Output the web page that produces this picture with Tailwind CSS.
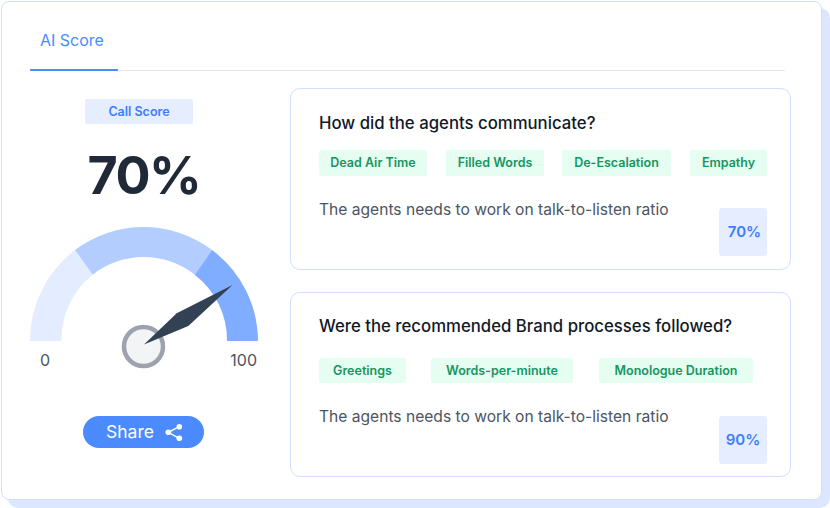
<!DOCTYPE html>
<html lang="en">
  <head>
    <meta charset="UTF-8" />
    <title>AI Score</title>
    <script src="https://cdn.jsdelivr.net/npm/@tailwindcss/browser@4"></script>
  </head>
  <body class="bg-white font-['Inter',sans-serif] overflow-hidden">
    <div class="relative w-[830px] h-[508px] overflow-hidden">
      <!-- offset panel behind the card -->
      <div class="absolute left-[8px] top-[8px] w-[822px] h-[500px] rounded-[10px] bg-[#dce7ff]"></div>

      <div class="absolute left-0 top-0 ml-px mt-px w-[821px] h-[499px] bg-white border border-[#d0e0ff] rounded-[8px] pl-[28px] pr-[36px]">
        <!-- tabs -->
        <div class="h-[69px] border-b border-[#e5e7eb] flex">
          <div class="w-[88px] h-[69px] border-b-[2px] border-[#4b8bff] rounded-[1px] pl-[10px] pt-[28px] text-[16px] leading-[20px] text-[#4b8bff]">AI Score</div>
        </div>

        <div class="flex">
          <!-- gauge column -->
          <div class="w-[228px] shrink-0 mr-[32px] flex flex-col items-center">
            <div class="self-start ml-[55px] mt-[28px] w-[108px] h-[25px] rounded-[2px] bg-[#e6edff] text-[#3b7fff] text-[12.5px] leading-[25px] font-semibold text-center">Call Score</div>
            <div class="mt-[21px] h-[62px] text-[52px] leading-[62px] tracking-[-1.5px] font-bold text-[#1f2937]">70%</div>
            <svg class="block mt-[19px]" width="228" height="144" viewBox="30 226 228 144">
              <path d="M30 341A114 114 0 0 1 75 250L92.700 274.700A82.500 82.500 0 0 0 61.500 341Z" fill="#e4ecff" />
              <path d="M75 250A114 114 0 0 1 212 250L194.700 274.700A82.500 82.500 0 0 0 92.700 274.700Z" fill="#b3cdff" />
              <path d="M212 250A114 114 0 0 1 258 341L227 341A82.500 82.500 0 0 0 194.700 274.700Z" fill="#80adff" />
              <circle cx="143.500" cy="346.500" r="19.500" fill="#f3f4f6" stroke="#9ca3af" stroke-width="4.500" />
              <path d="M144 344.500L176.700 313.300L232.500 285L188.300 326Z" fill="#334155" />
            </svg>
            <div class="w-full -mt-[20px] flex justify-between pl-[10px] pr-px text-[16px] leading-[20px] text-[#4b5563]">
              <span>0</span><span>100</span>
            </div>
            <button class="-ml-px mt-[46px] w-[121px] h-[32px] rounded-full bg-[#4b8bff] text-white text-[17.5px] flex items-center pl-[23px] gap-[9px]">
              <span>Share</span>
              <svg width="20" height="20" viewBox="0 0 20 20" fill="none" stroke="white" stroke-width="1.500">
                <path d="M16.300 4.700L5.300 10.300L16.300 16.300" />
                <circle cx="16.300" cy="4.700" r="2.800" fill="white" stroke="none" />
                <circle cx="5.300" cy="10.300" r="2.800" fill="white" stroke="none" />
                <circle cx="16.300" cy="16.300" r="2.800" fill="white" stroke="none" />
              </svg>
            </button>
          </div>

          <!-- question cards -->
          <div class="w-[501px] shrink-0 flex flex-col gap-[22px] mt-[17px]">
            <div class="h-[182px] border border-[#d0e0ff] rounded-[10px] pl-[28px] pr-[23px] pt-[23px]">
              <h2 class="text-[16.75px] leading-[22px] font-medium text-[#111827]">How did the agents communicate?</h2>
              <div class="flex gap-[18px] mt-[16px]">
                <span class="w-[108px] h-[26px] rounded-[2px] bg-[#e6fdf2] text-[#16965f] text-[12.5px] leading-[26px] font-semibold text-center">Dead Air Time</span>
                <span class="ml-px w-[98px] h-[26px] rounded-[2px] bg-[#e6fdf2] text-[#16965f] text-[12.5px] leading-[26px] font-semibold text-center">Filled Words</span>
                <span class="w-[109px] h-[26px] rounded-[2px] bg-[#e6fdf2] text-[#16965f] text-[12.5px] leading-[26px] font-semibold text-center">De-Escalation</span>
                <span class="ml-px w-[77px] h-[26px] rounded-[2px] bg-[#e6fdf2] text-[#16965f] text-[12.5px] leading-[26px] font-semibold text-center">Empathy</span>
              </div>
              <div class="flex justify-between mt-[32px]">
                <p class="-mt-[8px] text-[15.6px] leading-[20px] text-[#4b5563]">The agents needs to work on talk-to-listen ratio</p>
                <div class="w-[48px] pl-[3px] h-[48px] rounded-[3px] bg-[#e6edff] text-[#3b7fff] text-[15px] leading-[48px] font-semibold text-center">70%</div>
              </div>
            </div>

            <div class="h-[185px] border border-[#d0e0ff] rounded-[10px] pl-[28px] pr-[23px] pt-[22px]">
              <h2 class="text-[16.75px] leading-[22px] font-medium text-[#111827]">Were the recommended Brand processes followed?</h2>
              <div class="flex gap-[25px] mt-[21px]">
                <span class="w-[87px] h-[25px] rounded-[2px] bg-[#e6fdf2] text-[#16965f] text-[12.5px] leading-[25px] font-semibold text-center">Greetings</span>
                <span class="w-[142px] h-[25px] rounded-[2px] bg-[#e6fdf2] text-[#16965f] text-[12.5px] leading-[25px] font-semibold text-center">Words-per-minute</span>
                <span class="ml-px w-[154px] h-[25px] rounded-[2px] bg-[#e6fdf2] text-[#16965f] text-[12.5px] leading-[25px] font-semibold text-center">Monologue Duration</span>
              </div>
              <div class="flex justify-between mt-[33px]">
                <p class="-mt-[9px] text-[15.6px] leading-[20px] text-[#4b5563]">The agents needs to work on talk-to-listen ratio</p>
                <div class="w-[48px] h-[48px] rounded-[3px] bg-[#e6edff] text-[#3b7fff] text-[15px] leading-[48px] font-semibold text-center">90%</div>
              </div>
            </div>
          </div>
        </div>
      </div>
    </div>
  </body>
</html>
